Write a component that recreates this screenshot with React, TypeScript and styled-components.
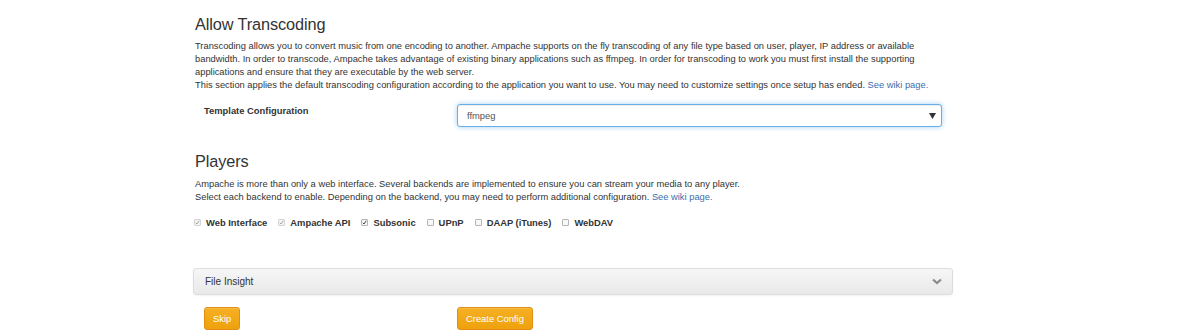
import styled, { createGlobalStyle } from "styled-components";

const GlobalStyle = createGlobalStyle`
	html, body {
		margin: 0;
		padding: 0;
		background: #ffffff;
	}
	body {
		font-family: "Liberation Sans", Arial, sans-serif;
		color: #333333;
	}
`;

const Page = styled.div`
	width: 760px;
	margin-left: 193px;
	padding-top: 14px;
`;

const Section = styled.section`
	padding-left: 2px;
`;

const Heading = styled.h3<{ $gap?: number }>`
	margin: 0 0 ${({ $gap }) => $gap ?? 6}px;
	font-size: 16.3px;
	line-height: 20px;
	font-weight: 400;
	color: #333333;
	letter-spacing: -0.1px;
`;

const Text = styled.p`
	margin: 0;
	font-size: 9.33px;
	line-height: 13px;
	color: #333333;
`;

const WikiLink = styled.a`
	color: #3a6fb0;
	text-decoration: none;
`;

const FormRow = styled.div`
	display: grid;
	grid-template-columns: 253px 507px;
`;

const Cell = styled.div`
	padding: 0 11px;
`;

const FieldLabel = styled.label`
	display: block;
	font-size: 9.4px;
	font-weight: 700;
	line-height: 13px;
	color: #333333;
`;

const Select = styled.div`
	height: 23px;
	box-sizing: border-box;
	border: 1px solid #66afe9;
	border-radius: 3px;
	box-shadow: inset 0 1px 1px rgba(0, 0, 0, 0.075), 0 0 5px rgba(102, 175, 233, 0.6);
	display: flex;
	align-items: center;
	justify-content: space-between;
	padding: 0 5px 0 9px;
	font-size: 9.4px;
	color: #555555;
	background: #ffffff;
`;

const TranscodeRow = styled(FormRow)`
	margin-top: 12px;
	align-items: start;
`;

const PlayersSection = styled(Section)`
	margin-top: 24px;
`;

const CheckList = styled.div`
	display: flex;
	align-items: center;
	gap: 11px;
	margin-top: 12px;
	margin-left: -1px;
`;

const CheckItem = styled.label`
	display: flex;
	align-items: center;
	gap: 5px;
	font-size: 9.4px;
	font-weight: 700;
	line-height: 13px;
	color: #333333;
`;

const Box = styled.span<{ $disabled?: boolean }>`
	width: 7px;
	height: 7px;
	box-sizing: border-box;
	border: 1px solid ${({ $disabled }) => ($disabled ? "#d4d4d4" : "#b5b5b5")};
	border-radius: 1px;
	background: ${({ $disabled }) => ($disabled ? "#f4f4f4" : "#f8f8f8")};
	display: flex;
	align-items: center;
	justify-content: center;
`;

const Panel = styled.div`
	margin-top: 39px;
	height: 27px;
	box-sizing: border-box;
	border: 1px solid #dddddd;
	border-radius: 3px;
	background: linear-gradient(to bottom, #f6f6f6 0%, #e9e9e9 100%);
	box-shadow: 0 1px 2px rgba(0, 0, 0, 0.05);
	display: flex;
	align-items: center;
	justify-content: space-between;
	padding: 0 10px 0 11px;
	font-size: 10px;
	color: #333333;
`;

const ButtonRow = styled(FormRow)`
	margin-top: 12px;
`;

const Button = styled.button`
	height: 23px;
	padding: 0 8px;
	border: 1px solid #e38d13;
	border-radius: 3px;
	background: linear-gradient(to bottom, #f6b024 0%, #eea10c 100%);
	box-shadow: inset 0 1px 0 rgba(255, 255, 255, 0.15), 0 1px 1px rgba(0, 0, 0, 0.075);
	color: #ffffff;
	font-family: "Liberation Sans", Arial, sans-serif;
	font-size: 9.4px;
	cursor: pointer;
`;

interface Player {
	id: string;
	label: string;
	checked: boolean;
	disabled: boolean;
}

const players: Player[] = [
	{ id: "web", label: "Web Interface", checked: true, disabled: true },
	{ id: "api", label: "Ampache API", checked: true, disabled: true },
	{ id: "subsonic", label: "Subsonic", checked: true, disabled: false },
	{ id: "upnp", label: "UPnP", checked: false, disabled: false },
	{ id: "daap", label: "DAAP (iTunes)", checked: false, disabled: false },
	{ id: "webdav", label: "WebDAV", checked: false, disabled: false },
];

function CheckMark({ disabled }: { disabled: boolean }) {
	return (
		<svg width="5" height="5" viewBox="0 0 10 10">
			<polyline
				points="1.5,5.5 4,8 8.5,1.5"
				fill="none"
				stroke={disabled ? "#a8a8a8" : "#444"}
				strokeWidth="2"
			/>
		</svg>
	);
}

function App() {
	return (
		<>
			<GlobalStyle />
			<Page>
				<Section>
					<Heading>Allow Transcoding</Heading>
					<Text>
						Transcoding allows you to convert music from one encoding to another. Ampache supports on the fly
						transcoding of any file type based on user, player, IP address or available bandwidth. In order to
						transcode, Ampache takes advantage of existing binary applications such as ffmpeg. In order for
						transcoding to work you must first install the supporting applications and ensure that they are
						executable by the web server.
						<br />
						This section applies the default transcoding configuration according to the application you want to
						use. You may need to customize settings once setup has ended. <WikiLink href="#">See wiki page.</WikiLink>
					</Text>
				</Section>

				<TranscodeRow>
					<Cell>
						<FieldLabel>Template Configuration</FieldLabel>
					</Cell>
					<Cell>
						<Select>
							<span>ffmpeg</span>
							<svg width="7" height="6" viewBox="0 0 7 6">
								<polygon points="0,0 7,0 3.5,6" fill="#333" />
							</svg>
						</Select>
					</Cell>
				</TranscodeRow>

				<PlayersSection>
					<Heading $gap={7}>Players</Heading>
					<Text>
						Ampache is more than only a web interface. Several backends are implemented to ensure you can stream
						your media to any player.
						<br />
						Select each backend to enable. Depending on the backend, you may need to perform additional
						configuration. <WikiLink href="#">See wiki page.</WikiLink>
					</Text>
					<CheckList>
						{players.map((p) => (
							<CheckItem key={p.id}>
								<Box $disabled={p.disabled}>{p.checked && <CheckMark disabled={p.disabled} />}</Box>
								{p.label}
							</CheckItem>
						))}
					</CheckList>
				</PlayersSection>

				<Panel>
					<span>File Insight</span>
					<svg width="10" height="7" viewBox="0 0 10 7">
						<polyline points="1,1.5 5,5 9,1.5" fill="none" stroke="#8a8a8a" strokeWidth="2.2" />
					</svg>
				</Panel>

				<ButtonRow>
					<Cell>
						<Button>Skip</Button>
					</Cell>
					<Cell>
						<Button>Create Config</Button>
					</Cell>
				</ButtonRow>
			</Page>
		</>
	);
}

export default App;
